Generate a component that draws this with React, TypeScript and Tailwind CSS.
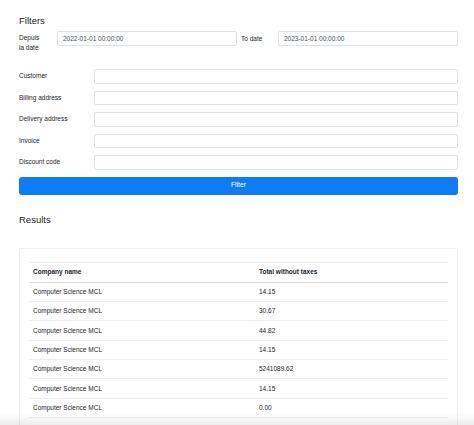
import React from "react";

const rows = ["14.15", "30.67", "44.82", "14.15", "5241089.62", "14.15", "0.00", "14.15"];

const fields = ["Customer", "Billing address", "Delivery address", "Invoice", "Discount code"];

export default function App() {
  return (
    <div
      className="relative h-[425px] w-[474px] overflow-hidden bg-white text-[#212529]"
      style={{ fontFamily: '"Liberation Sans", Arial, sans-serif' }}
    >
      <div className="px-[19px] pt-[15px] w-[477px]">
        <h5 className="text-[9.5px] font-medium leading-[12px]">Filters</h5>
        <div className="mt-[4px] flex items-start">
          <div className="w-[38px] pt-[2px] text-[6.5px] leading-[10px]">
            Depuis
            <br />
            la date
          </div>
          <div className="flex h-[15px] w-[180px] items-center rounded-[2px] border border-[#dee2e6] px-[5px] text-[6.5px] text-[#495057]">
            2022-01-01 00:00:00
          </div>
          <div className="w-[41px] pl-[4px] pt-[3px] text-[6.5px] leading-[10px]">To date</div>
          <div className="flex h-[15px] w-[180px] items-center rounded-[2px] border border-[#dee2e6] px-[5px] text-[6.5px] text-[#495057]">
            2023-01-01 00:00:00
          </div>
        </div>
        <div className="mt-[16px] flex flex-col gap-[7px]">
          {fields.map((f) => (
            <div key={f} className="flex items-center">
              <div className="w-[75px] text-[6.5px] leading-[10px]">{f}</div>
              <div className="h-[14.5px] w-[364px] rounded-[2px] border border-[#dee2e6] bg-white" />
            </div>
          ))}
        </div>
        <button className="mt-[7px] flex h-[18px] w-[439px] items-center justify-center rounded-[3px] bg-[#0f7cf6] text-[6.8px] text-white">
          Filter
        </button>
        <h5 className="mt-[19px] text-[9.5px] font-medium leading-[12px]">Results</h5>
        <div className="mt-[22px] w-[439px] rounded-[2px] border border-[#f0f0f0] px-[9px] pt-[13px]">
          <table className="w-full border-collapse text-[6.5px]">
            <thead>
              <tr className="h-[20px] border-t border-b border-t-[#eeeeee] border-b-[#dcdcdc]">
                <th className="w-[226px] pl-[4px] text-left font-bold">Company name</th>
                <th className="pl-[4px] text-left font-bold">Total without taxes</th>
              </tr>
            </thead>
            <tbody>
              {rows.map((v, i) => (
                <tr key={i} className="h-[19.4px] border-b border-[#eeeeee]">
                  <td className="pl-[4px]">Computer Science MCL</td>
                  <td className="pl-[4px]">{v}</td>
                </tr>
              ))}
            </tbody>
          </table>
        </div>
      </div>
      <div className="pointer-events-none absolute bottom-0 left-0 h-[12px] w-full bg-gradient-to-b from-transparent to-[rgba(0,0,0,0.07)]" />
    </div>
  );
}
